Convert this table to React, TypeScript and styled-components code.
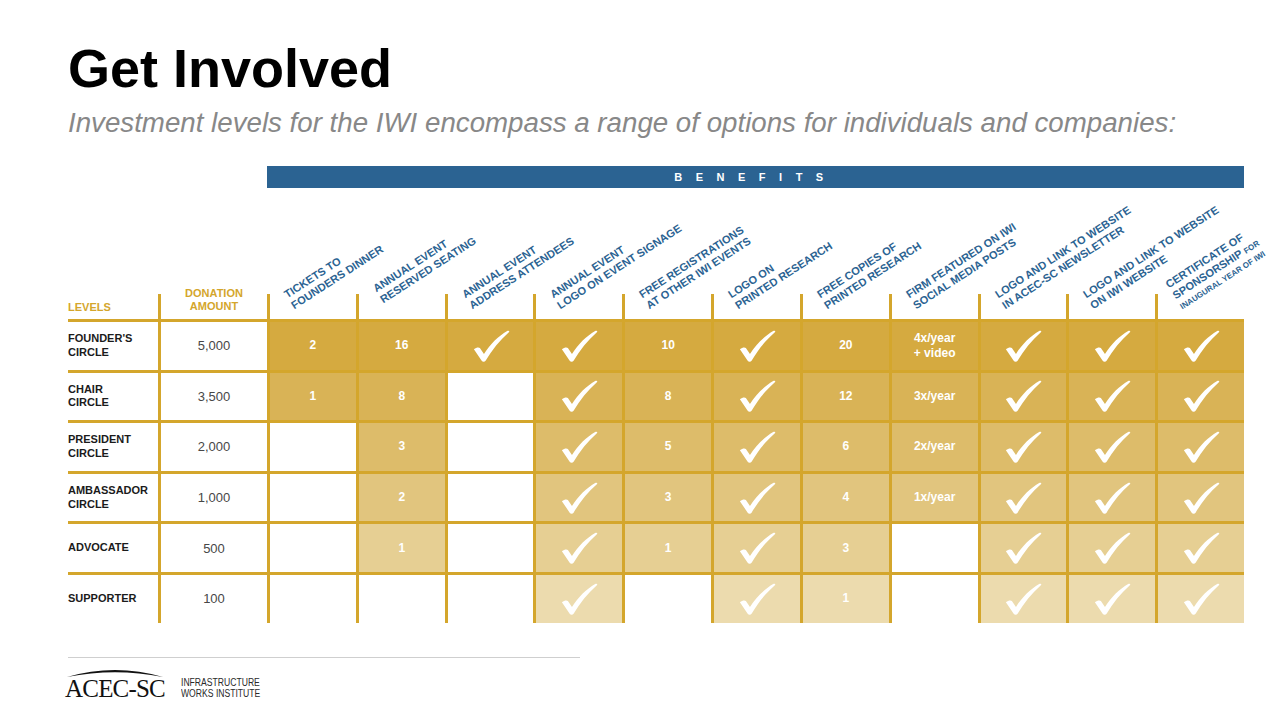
import React from 'react';
import styled, { createGlobalStyle } from 'styled-components';

const GOLD_LINE = '#d4a62c';
const BLUE = '#2b6392';
const SHADES = ['#d5aa40', '#d9b356', '#ddbc6a', '#e1c57e', '#e6cf93', '#ecdbae'];

const GlobalStyle = createGlobalStyle`
  html, body {
    margin: 0;
    padding: 0;
    background: #ffffff;
  }
  body {
    font-family: "Liberation Sans", Arial, sans-serif;
  }
`;

const Page = styled.div`
  width: 1277px;
  height: 720px;
  box-sizing: border-box;
  padding: 41px 0 0 68px;
  overflow: hidden;
  background: #fff;
`;

const Title = styled.h1`
  margin: 0;
  font-size: 54px;
  line-height: 54px;
  font-weight: 700;
  color: #000;
`;

const Subtitle = styled.p`
  margin: 12px 0 0 0;
  font-size: 27.7px;
  line-height: 32px;
  font-style: italic;
  color: #888;
`;

const BenefitsBar = styled.div`
  margin: 27px 0 0 199px;
  width: 977px;
  height: 22px;
  background: ${BLUE};
  color: #fff;
  font-size: 11px;
  font-weight: 700;
  letter-spacing: 13.5px;
  line-height: 22px;
  text-align: center;
  box-sizing: border-box;
`;

const Table = styled.div`
  margin-top: 106px;
  width: 1176px;
  display: grid;
  grid-template-columns: 90px 109px repeat(11, minmax(0, 1fr));
  grid-template-rows: 25px repeat(6, 50.6px);
`;

const HeadCell = styled.div<{ $line?: boolean; $center?: boolean; $pad?: number }>`
  display: flex;
  align-items: flex-end;
  justify-content: ${(p) => (p.$center ? 'center' : 'flex-start')};
  border-left: ${(p) => (p.$line ? `3px solid ${GOLD_LINE}` : 'none')};
  padding-bottom: ${(p) => p.$pad ?? 5}px;
  box-sizing: border-box;
  color: ${GOLD_LINE};
  font-size: 11px;
  font-weight: 700;
  line-height: 13px;
  text-align: center;
`;

const BenefitHead = styled.div`
  display: flex;
  align-items: flex-end;
  min-width: 0;
  border-left: 3px solid ${GOLD_LINE};
  padding: 0 0 7px 26px;
  box-sizing: border-box;
`;

const RotatedLabel = styled.div<{ $lift?: number }>`
  flex-shrink: 0;
  white-space: nowrap;
  color: ${BLUE};
  font-size: 11px;
  font-weight: 700;
  line-height: 13px;
  transform-origin: 0 100%;
  transform: translateY(${(p) => -(p.$lift || 0)}px) rotate(-33deg);
`;

const Small = styled.span`
  font-size: 8px;
`;

const SmallLine = styled.div`
  font-size: 8px;
  line-height: 11px;
`;

const BodyCell = styled.div<{ $bg?: string; $line?: boolean; $align?: 'left' | 'center' }>`
  display: flex;
  align-items: center;
  justify-content: ${(p) => (p.$align === 'left' ? 'flex-start' : 'center')};
  min-width: 0;
  box-sizing: border-box;
  border-top: 3px solid ${GOLD_LINE};
  border-left: ${(p) => (p.$line ? `3px solid ${GOLD_LINE}` : 'none')};
  background: ${(p) => p.$bg || '#fff'};
`;

const LevelName = styled.div`
  font-size: 11px;
  font-weight: 700;
  line-height: 13.5px;
  color: #1b1b1b;
`;

const Amount = styled.div`
  font-size: 13px;
  color: #474747;
`;

const Value = styled.div`
  font-size: 12px;
  font-weight: 700;
  line-height: 15px;
  color: #fff;
  text-align: center;
`;

const Footer = styled.div`
  margin-top: 34px;
`;

const Rule = styled.div`
  width: 512px;
  height: 1px;
  background: #cfcfcf;
`;

const Logo = styled.div`
  display: flex;
  align-items: flex-end;
  gap: 16px;
  margin-top: 8px;
  margin-left: -3px;
`;

const LogoMark = styled.div`
  display: flex;
  flex-direction: column;
  align-items: center;
`;

const LogoText = styled.div`
  font-family: "Liberation Serif", "Times New Roman", serif;
  font-size: 25px;
  line-height: 22px;
  letter-spacing: -0.8px;
  color: #111;
`;

const Institute = styled.div`
  font-size: 10px;
  line-height: 11px;
  color: #2a2a2a;
  transform: scaleX(0.86);
  transform-origin: 0 50%;
  padding-bottom: 1px;
`;

const Check = () => (
  <svg width="38" height="34" viewBox="0 0 40 34">
    <path
      d="M2 20.5 C4.5 18.3 7 18 8.3 19 L12.6 25.5 C19 15 28 6.5 37.5 1 C39 0.4 39.8 1.5 38.8 2.4 C29 11 21 21 14.3 32.4 C13.3 34 11.2 34 10.2 32.4 Z"
      fill="#fff"
    />
  </svg>
);

type Cell = null | 'check' | string | string[];

const C: Cell = 'check';

const benefits: { lines: React.ReactNode[]; lift?: number }[] = [
  { lines: ['TICKETS TO', 'FOUNDERS DINNER'] },
  { lines: ['ANNUAL EVENT', 'RESERVED SEATING'], lift: 6 },
  { lines: ['ANNUAL EVENT', 'ADDRESS ATTENDEES'] },
  { lines: ['ANNUAL EVENT', 'LOGO ON EVENT SIGNAGE'] },
  { lines: ['FREE REGISTRATIONS', 'AT OTHER IWI EVENTS'] },
  { lines: ['LOGO ON', 'PRINTED RESEARCH'] },
  { lines: ['FREE COPIES OF', 'PRINTED RESEARCH'] },
  { lines: ['FIRM FEATURED ON IWI', 'SOCIAL MEDIA POSTS'] },
  { lines: ['LOGO AND LINK TO WEBSITE', 'IN ACEC-SC NEWSLETTER'] },
  { lines: ['LOGO AND LINK TO WEBSITE', 'ON IWI WEBSITE'] },
];

const levels: { name: string[]; amount: string; cells: Cell[] }[] = [
  { name: ["FOUNDER'S", 'CIRCLE'], amount: '5,000', cells: ['2', '16', C, C, '10', C, '20', ['4x/year', '+ video'], C, C, C] },
  { name: ['CHAIR', 'CIRCLE'], amount: '3,500', cells: ['1', '8', null, C, '8', C, '12', '3x/year', C, C, C] },
  { name: ['PRESIDENT', 'CIRCLE'], amount: '2,000', cells: [null, '3', null, C, '5', C, '6', '2x/year', C, C, C] },
  { name: ['AMBASSADOR', 'CIRCLE'], amount: '1,000', cells: [null, '2', null, C, '3', C, '4', '1x/year', C, C, C] },
  { name: ['ADVOCATE'], amount: '500', cells: [null, '1', null, C, '1', C, '3', null, C, C, C] },
  { name: ['SUPPORTER'], amount: '100', cells: [null, null, null, C, null, C, '1', null, C, C, C] },
];

const renderCell = (cell: Cell) => {
  if (cell === 'check') return <Check />;
  if (Array.isArray(cell))
    return (
      <Value>
        {cell.map((l) => (
          <div key={l}>{l}</div>
        ))}
      </Value>
    );
  return <Value>{cell}</Value>;
};

export default function App() {
  return (
    <>
      <GlobalStyle />
      <Page>
        <Title>Get Involved</Title>
        <Subtitle>Investment levels for the IWI encompass a range of options for individuals and companies:</Subtitle>
        <BenefitsBar>BENEFITS</BenefitsBar>

        <Table>
          <HeadCell>LEVELS</HeadCell>
          <HeadCell $line $center $pad={6}>
            DONATION
            <br />
            AMOUNT
          </HeadCell>
          {benefits.map((b, i) => (
            <BenefitHead key={i}>
              <RotatedLabel $lift={b.lift}>
                {b.lines.map((l, j) => (
                  <div key={j}>{l}</div>
                ))}
              </RotatedLabel>
            </BenefitHead>
          ))}
          <BenefitHead>
            <RotatedLabel>
              <div>CERTIFICATE OF</div>
              <div>
                SPONSORSHIP <Small>FOR</Small>
              </div>
              <SmallLine>INAUGURAL YEAR OF IWI</SmallLine>
            </RotatedLabel>
          </BenefitHead>

          {levels.map((lv, r) => (
            <React.Fragment key={lv.amount}>
              <BodyCell $align="left">
                <LevelName>
                  {lv.name.map((n) => (
                    <div key={n}>{n}</div>
                  ))}
                </LevelName>
              </BodyCell>
              <BodyCell $line>
                <Amount>{lv.amount}</Amount>
              </BodyCell>
              {lv.cells.map((cell, c) => (
                <BodyCell key={c} $line $bg={cell === null ? '#fff' : SHADES[r]}>
                  {cell !== null && renderCell(cell)}
                </BodyCell>
              ))}
            </React.Fragment>
          ))}
        </Table>

        <Footer>
          <Rule />
          <Logo>
            <LogoMark>
              <svg width="100" height="12" viewBox="0 0 100 12">
                <path d="M2 11 Q50 -3 98 11 Q50 1.5 2 11 Z" fill="#111" />
              </svg>
              <LogoText>ACEC-SC</LogoText>
            </LogoMark>
            <Institute>
              <div>INFRASTRUCTURE</div>
              <div>WORKS INSTITUTE</div>
            </Institute>
          </Logo>
        </Footer>
      </Page>
    </>
  );
}
